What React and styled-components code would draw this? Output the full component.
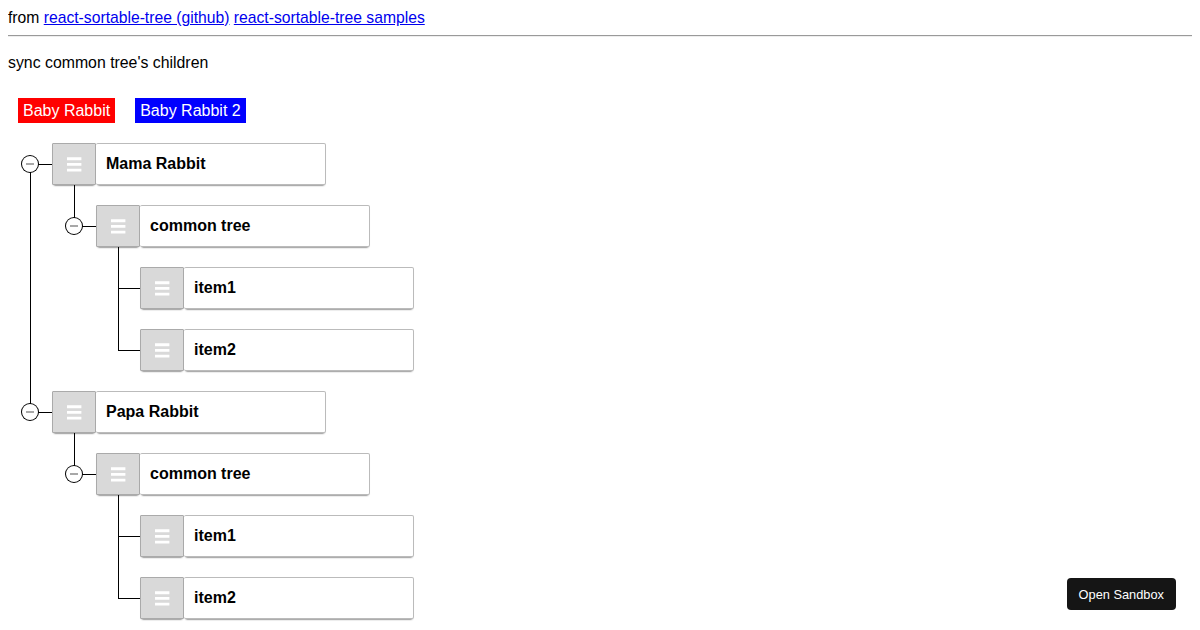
import React from 'react';
import styled, { createGlobalStyle } from 'styled-components';

const Global = createGlobalStyle`
  body {
    margin: 8px;
    font-family: "Liberation Sans", Arial, sans-serif;
    font-size: 16px;
    color: #000;
    background: #fff;
  }
`;

const Header = styled.div`
  font-size: 15.7px;
  line-height: 19px;
`;

const Link = styled.a`
  color: #0000ee;
  text-decoration: underline;
`;

const Rule = styled.hr`
  margin: 8px 0;
  border: none;
  border-top: 1px solid #9a9a9a;
  border-bottom: 1px solid #eeeeee;
`;

const Para = styled.p`
  margin: 16px 0;
  font-size: 15.85px;
  line-height: 19px;
`;

const ButtonRow = styled.div`
  display: flex;
  gap: 20px;
  padding: 10px 10px 10px;
`;

const ColorButton = styled.div`
  background: ${(p) => p.$bg};
  color: #fff;
  padding: 3px 5px;
  line-height: 19px;
  cursor: pointer;
`;

const Tree = styled.div`
  display: flex;
  flex-direction: column;
`;

const Row = styled.div`
  display: flex;
  height: 62px;
`;

const vTop = { full: '0', top: '0', bottom: '50%' };
const vHeight = { full: '100%', top: '50%', bottom: '50%' };

const Block = styled.div`
  position: relative;
  flex: none;
  width: 44px;
  height: 100%;
  &::before {
    content: '';
    display: ${(p) => (p.$v ? 'block' : 'none')};
    position: absolute;
    left: 22px;
    width: 1px;
    top: ${(p) => vTop[p.$v] || '0'};
    height: ${(p) => vHeight[p.$v] || '0'};
    background: #000;
  }
  &::after {
    content: '';
    display: ${(p) => (p.$h ? 'block' : 'none')};
    position: absolute;
    left: 22px;
    width: 22px;
    top: 31px;
    height: 1px;
    background: #000;
  }
`;

const RowWrapper = styled.div`
  position: relative;
  display: flex;
  box-sizing: border-box;
  height: 100%;
  padding: 10px 10px 10px 0;
  &::after {
    content: '';
    display: ${(p) => (p.$childLine ? 'block' : 'none')};
    position: absolute;
    left: 22px;
    bottom: 0;
    width: 1px;
    height: 10px;
    background: #000;
  }
`;

const Handle = styled.div`
  box-sizing: border-box;
  width: 44px;
  height: 100%;
  flex: none;
  display: flex;
  align-items: center;
  justify-content: center;
  background: #d9d9d9;
  border: 1px solid #aaa;
  border-radius: 1px;
  box-shadow: 0 2px 2px -2px;
  cursor: move;
`;

const Contents = styled.div`
  box-sizing: border-box;
  height: 100%;
  min-width: 230px;
  display: flex;
  align-items: center;
  padding: 0 5px 0 10px;
  background: #fff;
  border: 1px solid #bbb;
  border-left: none;
  border-radius: 2px;
  box-shadow: 0 2px 2px -2px;
`;

const Title = styled.span`
  font-weight: bold;
  font-size: 16px;
`;

const Collapse = styled.button`
  position: absolute;
  left: -22px;
  top: 50%;
  transform: translate(-50%, -50%);
  width: 16px;
  height: 16px;
  padding: 0;
  border: none;
  border-radius: 50%;
  background: #fff;
  box-shadow: 0 0 0 1px #000;
  display: flex;
  align-items: center;
  justify-content: center;
  cursor: pointer;
`;

const Sandbox = styled.button`
  position: fixed;
  right: 24px;
  bottom: 20px;
  height: 32px;
  padding: 0 12px;
  border: none;
  border-radius: 4px;
  background: #151515;
  color: #fff;
  font-family: "Liberation Sans", Arial, sans-serif;
  font-size: 12.8px;
  cursor: pointer;
`;

const common = () => ({
  title: 'common tree',
  children: [{ title: 'item1' }, { title: 'item2' }],
});

const data = [
  { title: 'Mama Rabbit', children: [common()] },
  { title: 'Papa Rabbit', children: [common()] },
];

function flatten(nodes, depth = 0, lower = [], out = [], isRoot = true) {
  nodes.forEach((n, i) => {
    const counts = [...lower, nodes.length - i - 1];
    out.push({
      node: n,
      depth,
      counts,
      firstRoot: isRoot && i === 0,
    });
    if (n.children) flatten(n.children, depth + 1, counts, out, false);
  });
  return out;
}

const rows = flatten(data);

function HandleIcon() {
  return (
    <svg width="42" height="42" viewBox="0 0 42 42">
      <g stroke="#fff" strokeWidth="2.9">
        <path d="M14 15.7h14.4M14 21.4h14.4M14 27.1h14.4" />
      </g>
    </svg>
  );
}

function MinusIcon() {
  return (
    <svg width="18" height="18" viewBox="0 0 18 18">
      <path d="M4.5 9h9" stroke="#989898" strokeWidth="1.9" />
    </svg>
  );
}

export default function App() {
  return (
    <>
      <Global />
      <Header>
        from <Link href="#">react-sortable-tree (github)</Link>{' '}
        <Link href="#">react-sortable-tree samples</Link>
      </Header>
      <Rule />
      <Para>sync common tree's children</Para>
      <ButtonRow>
        <ColorButton $bg="#ff0000">Baby Rabbit</ColorButton>
        <ColorButton $bg="#0000ff">Baby Rabbit 2</ColorButton>
      </ButtonRow>
      <Tree>
        {rows.map((r, idx) => {
          const blocks = [];
          for (let i = 0; i <= r.depth; i++) {
            if (i < r.depth) {
              blocks.push(<Block key={i} $v={r.counts[i] > 0 ? 'full' : null} />);
            } else {
              const hasLower = r.counts[i] > 0;
              let v = null;
              if (r.firstRoot) v = hasLower ? 'bottom' : null;
              else v = hasLower ? 'full' : 'top';
              blocks.push(<Block key={i} $v={v} $h />);
            }
          }
          const hasKids = !!r.node.children;
          return (
            <Row key={idx}>
              {blocks}
              <RowWrapper $childLine={hasKids}>
                {hasKids && (
                  <Collapse aria-label="Collapse">
                    <MinusIcon />
                  </Collapse>
                )}
                <Handle>
                  <HandleIcon />
                </Handle>
                <Contents>
                  <Title>{r.node.title}</Title>
                </Contents>
              </RowWrapper>
            </Row>
          );
        })}
      </Tree>
      <Sandbox>Open Sandbox</Sandbox>
    </>
  );
}
